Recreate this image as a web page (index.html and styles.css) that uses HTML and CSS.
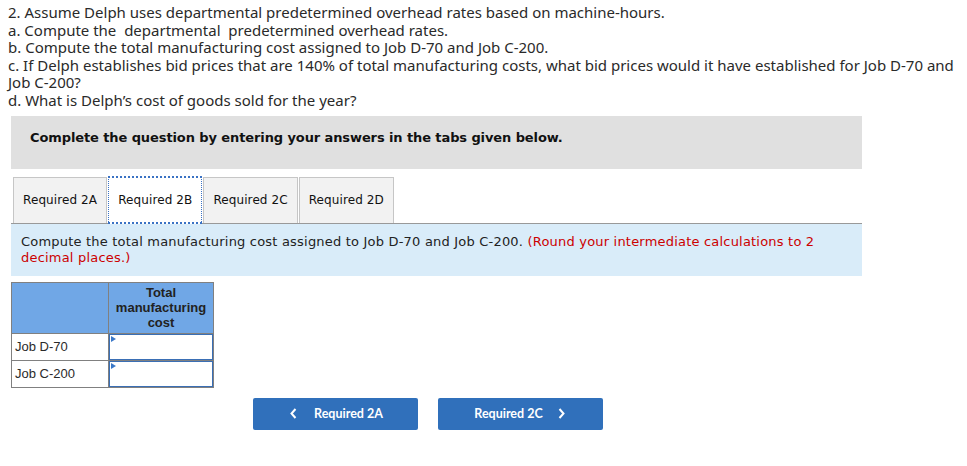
FILE: index.html
```html
<!DOCTYPE html>
<html lang="en">
<head>
	<meta charset="UTF-8">
	<title>Job costing - Required 2B</title>
	<link rel="stylesheet" href="styles.css">
</head>
<body>
	<div class="question">
		<p>2. Assume Delph uses departmental predetermined overhead rates based on machine-hours.</p>
		<p>a. Compute the &nbsp;departmental &nbsp;predetermined overhead rates.</p>
		<p>b. Compute the total manufacturing cost assigned to Job D-70 and Job C-200.</p>
		<p>c. If Delph establishes bid prices that are 140% of total manufacturing costs, what bid prices would it have established for Job D-70 and Job C-200?</p>
		<p>d. What is Delph’s cost of goods sold for the year?</p>
	</div>

	<div class="panel">
		<div class="notice">Complete the question by entering your answers in the tabs given below.</div>

		<div class="tabs">
			<button type="button" class="tab">Required 2A</button>
			<button type="button" class="tab active">Required 2B</button>
			<button type="button" class="tab">Required 2C</button>
			<button type="button" class="tab">Required 2D</button>
		</div>

		<div class="prompt">
			Compute the total manufacturing cost assigned to Job D-70 and Job C-200. <span class="hint">(Round your intermediate calculations to 2 decimal places.)</span>
		</div>

		<table class="answer">
			<tr>
				<th></th>
				<th class="col-cost">Total manufacturing cost</th>
			</tr>
			<tr>
				<td class="label">Job D-70</td>
				<td class="cell"><input type="text"></td>
			</tr>
			<tr>
				<td class="label">Job C-200</td>
				<td class="cell"><input type="text"></td>
			</tr>
		</table>

		<div class="nav">
			<button type="button" class="nav-btn prev">
				<svg class="chevron" width="7" height="11" viewBox="0 0 7 11"><path d="M5.5 1 1.5 5.5 5.5 10" fill="none" stroke="white" stroke-width="2"/></svg>
				<span>Required 2A</span>
			</button>
			<button type="button" class="nav-btn next">
				<span>Required 2C</span>
				<svg class="chevron" width="7" height="11" viewBox="0 0 7 11"><path d="M1.5 1 5.5 5.5 1.5 10" fill="none" stroke="white" stroke-width="2"/></svg>
			</button>
		</div>
	</div>
</body>
</html>
```

FILE: styles.css
```css
* {
	box-sizing: border-box;
}

body {
	margin: 0;
	padding: 4px 8px;
	background-color: white;
	color: #2a2a2a;
	font-family: "Noto Sans", "Open Sans", sans-serif;
}

.question p {
	margin: 0;
	font-size: 15px;
	line-height: 17.6px;
}

.panel {
	width: 851px;
	margin: 6px 0 0 3px;
}

.notice {
	height: 53px;
	padding: 14px 19px;
	background-color: #e0e0e0;
	font-family: "DejaVu Sans", Verdana, sans-serif;
	font-size: 13px;
	letter-spacing: -0.1px;
	font-weight: bold;
	color: #111;
}

.tabs {
	display: flex;
	margin-top: 8px;
	padding-left: 2px;
	border-bottom: 1px solid #999;
}

.tab {
	height: 46px;
	padding: 0 9px;
	margin-right: 1px;
	border: 1px solid #c6c6c6;
	border-bottom: none;
	background-color: #f2f2f2;
	font-family: "DejaVu Sans", Verdana, sans-serif;
	font-size: 12px;
	letter-spacing: 0.1px;
	color: #111;
}

.tab.active {
	height: 48px;
	margin-top: -1px;
	margin-bottom: -1px;
	background-color: white;
	border: 1px dotted #3a72c4;
	border-width: 2px 1px 2px 1px;
}

.prompt {
	padding: 10px 10px 10px;
	background-color: #d9ecf9;
	font-family: "DejaVu Sans", Verdana, sans-serif;
	font-size: 13px;
	letter-spacing: 0.2px;
	line-height: 16px;
	color: #222;
}

.hint {
	color: #c00;
}

.answer {
	margin-top: 6px;
	border-collapse: collapse;
	font-family: "Liberation Sans", Arial, sans-serif;
	font-size: 13px;
}

.answer th {
	height: 51px;
	padding: 2px 4px;
	background-color: #70a7e6;
	border: 1px solid #808080;
	font-weight: bold;
	line-height: 15px;
	color: #222;
}

.answer th:first-child {
	width: 97px;
}

.col-cost {
	width: 105px;
}

.label {
	height: 27px;
	padding: 0 3px;
	border: 1px solid #808080;
}

.cell {
	padding: 0;
	border: 1px solid #808080;
	position: relative;
}

.cell::before {
	content: "";
	position: absolute;
	left: 2px;
	top: 2px;
	border-left: 5px solid #3a78c8;
	border-top: 3px solid transparent;
	border-bottom: 3px solid transparent;
}

.cell input {
	display: block;
	width: 100%;
	height: 26px;
	margin: 0;
	border: 1px solid #3a6fb5;
	background: white;
	outline: none;
}

.nav {
	display: flex;
	gap: 20px;
	margin: 10px 0 0 242px;
}

.nav-btn {
	display: flex;
	align-items: center;
	justify-content: center;
	width: 165px;
	height: 32px;
	border: none;
	border-radius: 2px;
	background-color: #3070bb;
	color: white;
	font-family: "Lato", "Open Sans", sans-serif;
	font-size: 12.5px;
	font-weight: bold;
}

.prev {
	padding-right: 4px;
}

.prev .chevron {
	margin-right: 17px;
}

.next {
	padding-left: 4px;
}

.next .chevron {
	margin-left: 15px;
}
```
